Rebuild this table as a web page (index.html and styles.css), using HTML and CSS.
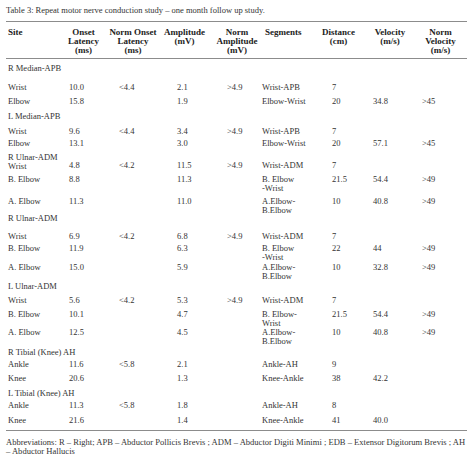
FILE: index.html
```html
<!DOCTYPE html>
<html>
<head>
<meta charset="utf-8">
<link rel="stylesheet" href="styles.css">
</head>
<body>
<div class="page">
  <p class="caption">Table 3: Repeat motor nerve conduction study – one month follow up study.</p>
  <div class="table">
    <div class="row head">
      <div>Site</div>
      <div>Onset<br>Latency<br>(ms)</div>
      <div>Norm Onset<br>Latency<br>(ms)</div>
      <div>Amplitude<br>(mV)</div>
      <div>Norm<br>Amplitude<br>(mV)</div>
      <div>Segments</div>
      <div>Distance<br>(cm)</div>
      <div>Velocity<br>(m/s)</div>
      <div>Norm<br>Velocity<br>(m/s)</div>
    </div>
    <div class="body">
      <div class="row h22 first"><div class="group">R Median-APB</div></div>
      <div class="row h14"><div>Wrist</div><div>10.0</div><div>&lt;4.4</div><div>2.1</div><div>&gt;4.9</div><div>Wrist-APB</div><div>7</div><div></div><div></div></div>
      <div class="row h15"><div>Elbow</div><div>15.8</div><div></div><div>1.9</div><div></div><div>Elbow-Wrist</div><div>20</div><div>34.8</div><div>&gt;45</div></div>
      <div class="row h15"><div class="group">L Median-APB</div></div>
      <div class="row h12"><div>Wrist</div><div>9.6</div><div>&lt;4.4</div><div>3.4</div><div>&gt;4.9</div><div>Wrist-APB</div><div>7</div><div></div><div></div></div>
      <div class="row h14"><div>Elbow</div><div>13.1</div><div></div><div>3.0</div><div></div><div>Elbow-Wrist</div><div>20</div><div>57.1</div><div>&gt;45</div></div>
      <div class="row h22 low"><div class="two">R Ulnar-ADM<br>Wrist</div><div>4.8</div><div>&lt;4.2</div><div>11.5</div><div>&gt;4.9</div><div>Wrist-ADM</div><div>7</div><div></div><div></div></div>
      <div class="row h22"><div>B. Elbow</div><div>8.8</div><div></div><div>11.3</div><div></div><div class="two">B. Elbow<br>-Wrist</div><div>21.5</div><div>54.4</div><div>&gt;49</div></div>
      <div class="row h17"><div>A. Elbow</div><div>11.3</div><div></div><div>11.0</div><div></div><div class="two">A.Elbow-<br>B.Elbow</div><div>10</div><div>40.8</div><div>&gt;49</div></div>
      <div class="row h18"><div class="group">R Ulnar-ADM</div></div>
      <div class="row h12"><div>Wrist</div><div>6.9</div><div>&lt;4.2</div><div>6.8</div><div>&gt;4.9</div><div>Wrist-ADM</div><div>7</div><div></div><div></div></div>
      <div class="row h19"><div>B. Elbow</div><div>11.9</div><div></div><div>6.3</div><div></div><div class="two">B. Elbow<br>-Wrist</div><div>22</div><div>44</div><div>&gt;49</div></div>
      <div class="row h19"><div>A. Elbow</div><div>15.0</div><div></div><div>5.9</div><div></div><div class="two">A.Elbow-<br>B.Elbow</div><div>10</div><div>32.8</div><div>&gt;49</div></div>
      <div class="row h14"><div class="group">L Ulnar-ADM</div></div>
      <div class="row h14"><div>Wrist</div><div>5.6</div><div>&lt;4.2</div><div>5.3</div><div>&gt;4.9</div><div>Wrist-ADM</div><div>7</div><div></div><div></div></div>
      <div class="row h18"><div>B. Elbow</div><div>10.1</div><div></div><div>4.7</div><div></div><div class="two">B. Elbow-<br>Wrist</div><div>21.5</div><div>54.4</div><div>&gt;49</div></div>
      <div class="row h20"><div>A. Elbow</div><div>12.5</div><div></div><div>4.5</div><div></div><div class="two">A.Elbow-<br>B.Elbow</div><div>10</div><div>40.8</div><div>&gt;49</div></div>
      <div class="row h12"><div class="group">R Tibial (Knee) AH</div></div>
      <div class="row h14"><div>Ankle</div><div>11.6</div><div>&lt;5.8</div><div>2.1</div><div></div><div>Ankle-AH</div><div>9</div><div></div><div></div></div>
      <div class="row h15"><div>Knee</div><div>20.6</div><div></div><div>1.3</div><div></div><div>Knee-Ankle</div><div>38</div><div>42.2</div><div></div></div>
      <div class="row h12"><div class="group">L Tibial (Knee) AH</div></div>
      <div class="row h15"><div>Ankle</div><div>11.3</div><div>&lt;5.8</div><div>1.8</div><div></div><div>Ankle-AH</div><div>8</div><div></div><div></div></div>
      <div class="row h16"><div>Knee</div><div>21.6</div><div></div><div>1.4</div><div></div><div>Knee-Ankle</div><div>41</div><div>40.0</div><div></div></div>
    </div>
  </div>
  <p class="abbr">Abbreviations: R – Right; APB – Abductor Pollicis Brevis ; ADM – Abductor Digiti Minimi ; EDB – Extensor Digitorum Brevis ; AH – Abductor Hallucis</p>
</div>
</body>
</html>
```
FILE: styles.css
```css
html, body {
  margin: 0;
  padding: 0;
  background: #ffffff;
}
.page {
  width: 461px;
  margin-left: 6px;
  font-family: "Liberation Serif", "DejaVu Serif", serif;
  font-size: 8.5px;
  line-height: 8px;
  color: #333333;
}
.caption {
  margin: 0;
  padding-top: 6px;
  margin-bottom: 7px;
  white-space: nowrap;
}
.table {
  border-top: 1px solid #8c8c8c;
  border-bottom: 1px solid #8c8c8c;
}
.row {
  display: grid;
  grid-template-columns: 58px 42px 57px 47px 48px 60px 48px 50px 51px;
  box-sizing: border-box;
}
.row > div {
  white-space: nowrap;
  padding-top: 2px;
}
.row > div.two {
  line-height: 8.5px;
}
.head {
  border-bottom: 1px solid #8c8c8c;
  font-weight: bold;
  font-size: 9px;
  color: #222222;
  line-height: 9px;
  padding-top: 4px;
  padding-bottom: 3px;
}
.head > div { text-align: center; }
.head > div:nth-child(1) { text-align: left; padding-left: 2px; }
.head > div:nth-child(2) { padding-right: 3px; }
.head > div:nth-child(3) { padding-left: 0; margin-left: -3px; }
.head > div:nth-child(4) { padding-right: 4px; }
.head > div:nth-child(5) { padding-left: 6px; }
.head > div:nth-child(6) { text-align: left; padding-left: 7px; }
.head > div:nth-child(7) { padding-right: 7px; }
.head > div:nth-child(8) { padding-right: 2px; }
.head > div:nth-child(9) { padding-right: 2px; }

.body .row > div:nth-child(1) { padding-left: 2px; }
.body .row > div:nth-child(2) { padding-left: 5px; }
.body .row > div:nth-child(3) { padding-left: 13px; }
.body .row > div:nth-child(4) { padding-left: 14px; }
.body .row > div:nth-child(5) { padding-left: 17px; }
.body .row > div:nth-child(6) { padding-left: 4px; }
.body .row > div:nth-child(7) { padding-left: 14px; }
.body .row > div:nth-child(8) { padding-left: 7px; }
.body .row > div:nth-child(9) { padding-left: 6px; }

.body .row > .group { grid-column: 1 / -1; }
.first > div { padding-top: 5px; }
.low > div { padding-top: 10px; }
.low > div.two { padding-top: 2px; }

.h12 { height: 12px; }
.h14 { height: 14px; }
.h15 { height: 15px; }
.h16 { height: 16px; }
.h17 { height: 17px; }
.h18 { height: 18px; }
.h19 { height: 19px; }
.h20 { height: 20px; }
.h22 { height: 22px; }

.abbr {
  margin: 7px 0 0 0;
  font-size: 8.56px;
  line-height: 8.6px;
}
```
